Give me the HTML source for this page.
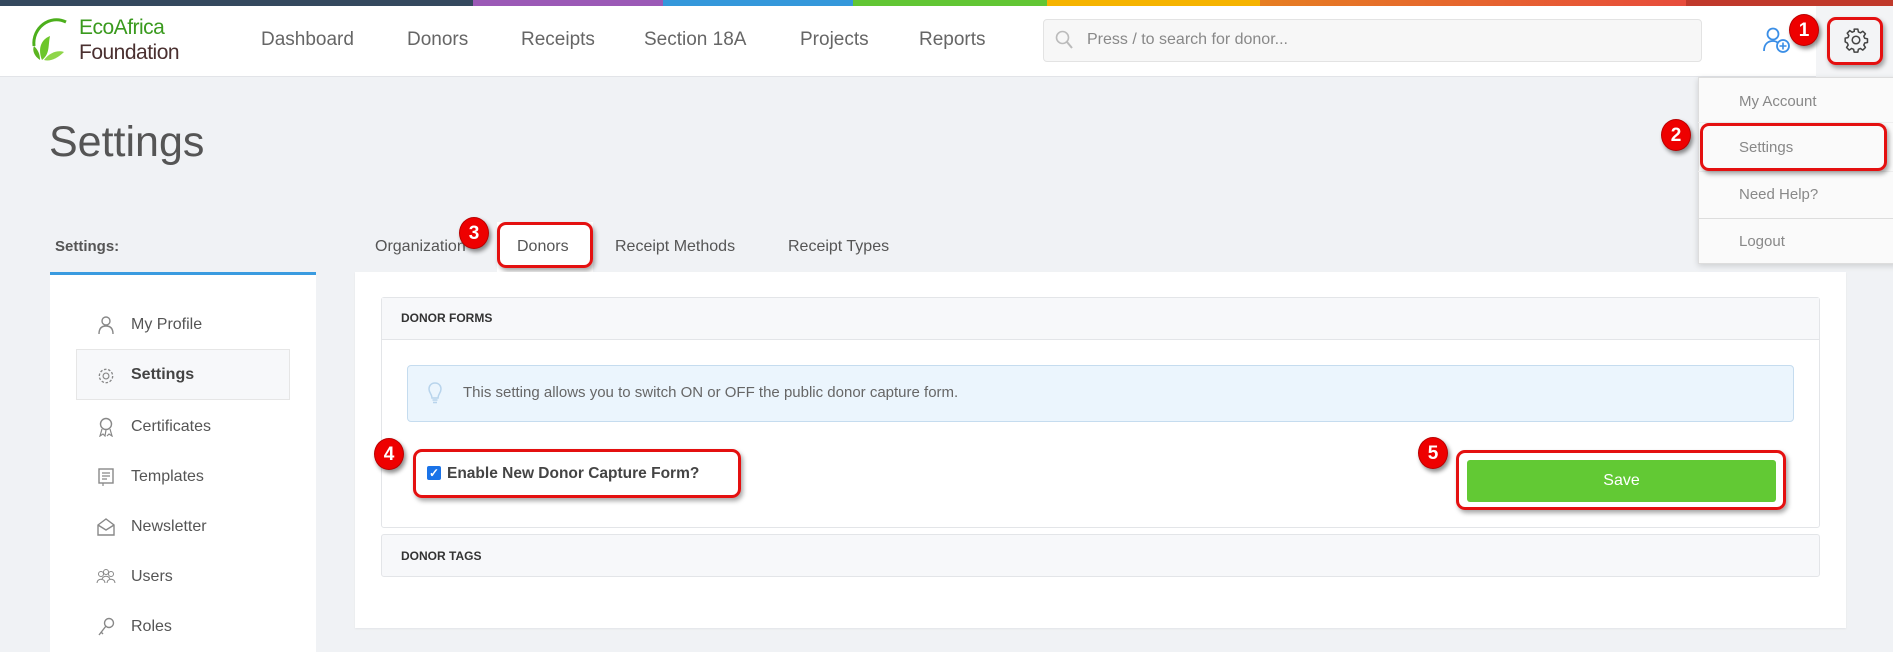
<!DOCTYPE html>
<html><head><meta charset="utf-8"><style>
*{box-sizing:border-box;margin:0;padding:0}
body{width:1893px;height:641px;overflow:hidden;background:#f0f2f5;font-family:"Liberation Sans",sans-serif;color:#555;position:relative}
.a{position:absolute}
.bar{top:0;height:6px}
.badge{position:absolute;width:30px;height:32px;border-radius:50%;background:#e00;color:#fff;font-weight:bold;font-size:19px;text-align:center;line-height:32px;box-shadow:2px 3px 4px rgba(0,0,0,.45);border:1px solid #b00}
.rb{position:absolute;border:3px solid #e41010;border-radius:9px;box-shadow:2px 3px 5px rgba(0,0,0,.35)}
.nav{top:29px;font-size:19px;color:#666}
.si{left:131px;font-size:16px;color:#555}
.ic{left:96px;width:20px;height:20px}
</style></head><body>
<div class="a bar" style="left:0;width:473px;background:#34495e"></div>
<div class="a bar" style="left:473px;width:190px;background:#9b59b6"></div>
<div class="a bar" style="left:663px;width:190px;background:#3498db"></div>
<div class="a bar" style="left:853px;width:194px;background:#62c634"></div>
<div class="a bar" style="left:1047px;width:213px;background:#f6b400"></div>
<div class="a bar" style="left:1260px;width:426px;background:linear-gradient(90deg,#e67e22,#e74c3c)"></div>
<div class="a bar" style="left:1686px;width:207px;background:#c0392b"></div>
<div class="a" style="left:0;top:6px;width:1893px;height:71px;background:#fff;border-bottom:1px solid #e2e4e8"></div>
<!-- logo -->
<svg class="a" style="left:28px;top:16px" width="44" height="48" viewBox="0 0 44 48"><path d="M38 6 C22 -2 4 12 6 30" fill="none" stroke="#4caf1c" stroke-width="3"/><path d="M14 44 C10 34 12 24 22 20 C20 30 22 38 14 44Z" fill="#6cc62a"/><path d="M16 44 C22 36 30 34 36 36 C30 42 22 46 16 44Z" fill="#8fd64a"/><path d="M12 44 C6 40 4 34 6 30 C10 34 12 38 12 44Z" fill="#5bb521"/></svg>
<div class="a" style="left:79px;top:16px;font-size:21px;color:#3a9a1e;letter-spacing:-.5px">EcoAfrica</div>
<div class="a" style="left:79px;top:41px;font-size:21px;color:#4a3030;letter-spacing:-.5px">Foundation</div>
<div class="a nav" style="left:261px">Dashboard</div>
<div class="a nav" style="left:407px">Donors</div>
<div class="a nav" style="left:521px">Receipts</div>
<div class="a nav" style="left:644px">Section 18A</div>
<div class="a nav" style="left:800px">Projects</div>
<div class="a nav" style="left:919px">Reports</div>
<div class="a" style="left:1043px;top:19px;width:659px;height:43px;background:#f7f7f7;border:1px solid #e3e3e3;border-radius:4px"></div>
<svg class="a" style="left:1055px;top:30px" width="18" height="20" viewBox="0 0 18 20"><circle cx="7.5" cy="7.5" r="6" fill="none" stroke="#bbb" stroke-width="1.6"/><path d="M12 12 L17 18" stroke="#bbb" stroke-width="2"/></svg>
<div class="a" style="left:1087px;top:31px;font-size:16px;color:#888">Press / to search for donor...</div>
<svg class="a" style="left:1762px;top:26px" width="30" height="28" viewBox="0 0 30 28"><circle cx="11" cy="8" r="5.5" fill="none" stroke="#3a8ee6" stroke-width="1.8"/><path d="M2 25 C2 17 7 15 11 15 C13 15 15 16 16 17" fill="none" stroke="#3a8ee6" stroke-width="1.8"/><circle cx="21" cy="20" r="6" fill="#fff" stroke="#3a8ee6" stroke-width="1.8"/><path d="M21 16.5V23.5M17.5 20H24.5" stroke="#3a8ee6" stroke-width="1.6"/></svg>
<div class="a" style="left:1816px;top:6px;width:77px;height:71px;background:#f3f4f6"></div>
<svg class="a" style="left:1843px;top:27px" width="26" height="26" viewBox="0 0 24 24"><path d="M10.3 2h3.4l.5 2.6 1.9.8 2.2-1.5 2.4 2.4-1.5 2.2.8 1.9 2.6.5v3.4l-2.6.5-.8 1.9 1.5 2.2-2.4 2.4-2.2-1.5-1.9.8-.5 2.6h-3.4l-.5-2.6-1.9-.8-2.2 1.5-2.4-2.4 1.5-2.2-.8-1.9L2 13.7v-3.4l2.6-.5.8-1.9-1.5-2.2 2.4-2.4 2.2 1.5 1.9-.8z" fill="none" stroke="#444" stroke-width="1.4" stroke-linejoin="round"/><circle cx="12" cy="12" r="3.5" fill="none" stroke="#444" stroke-width="1.4"/></svg>
<div class="rb" style="left:1827px;top:17px;width:56px;height:48px"></div>
<div class="badge" style="left:1789px;top:14px">1</div>
<!-- dropdown -->
<div class="a" style="left:1698px;top:77px;width:200px;height:187px;background:#fafafa;border:1px solid #ddd;box-shadow:0 2px 6px rgba(0,0,0,.15)"></div>
<div class="a" style="left:1698px;top:122px;width:195px;height:1px;background:#eee"></div>
<div class="a" style="left:1698px;top:171px;width:195px;height:1px;background:#eee"></div>
<div class="a" style="left:1698px;top:218px;width:195px;height:1px;background:#ddd"></div>
<div class="a" style="left:1739px;top:93px;font-size:15px;color:#888">My Account</div>
<div class="a" style="left:1739px;top:139px;font-size:15px;color:#888">Settings</div>
<div class="a" style="left:1739px;top:186px;font-size:15px;color:#888">Need Help?</div>
<div class="a" style="left:1739px;top:233px;font-size:15px;color:#888">Logout</div>
<div class="rb" style="left:1700px;top:123px;width:187px;height:48px"></div>
<div class="badge" style="left:1661px;top:119px">2</div>
<!-- title -->
<div class="a" style="left:49px;top:118px;font-size:43px;color:#555;font-weight:300">Settings</div>
<div class="a" style="left:55px;top:238px;font-size:15px;color:#555;font-weight:bold">Settings:</div>
<div class="a" style="left:50px;top:272px;width:266px;height:380px;background:#fff;border-top:3px solid #3a9be0"></div>
<div class="a" style="left:76px;top:349px;width:214px;height:51px;background:#f7f8fa;border:1px solid #e6e6e6"></div>
<svg class="a ic" style="top:315px" viewBox="0 0 20 20"><circle cx="10" cy="6" r="4" fill="none" stroke="#888" stroke-width="1.4"/><path d="M3 19C3 13 6 11 10 11S17 13 17 19" fill="none" stroke="#888" stroke-width="1.4"/></svg>
<div class="a si" style="top:316px">My Profile</div>
<svg class="a ic" style="top:366px" viewBox="0 0 24 24"><circle cx="12" cy="12" r="8" fill="none" stroke="#888" stroke-width="1.6" stroke-dasharray="3 2"/><circle cx="12" cy="12" r="3.5" fill="none" stroke="#888" stroke-width="1.4"/></svg>
<div class="a si" style="top:366px;font-weight:bold;color:#444">Settings</div>
<svg class="a ic" style="top:417px" viewBox="0 0 20 20"><circle cx="10" cy="7" r="5.5" fill="none" stroke="#888" stroke-width="1.4"/><path d="M6 12L4 19 7 17 9 19 10 13M14 12L16 19 13 17 11 19" fill="none" stroke="#888" stroke-width="1.2"/></svg>
<div class="a si" style="top:418px">Certificates</div>
<svg class="a ic" style="top:467px" viewBox="0 0 20 20"><rect x="3" y="2" width="14" height="14" fill="none" stroke="#888" stroke-width="1.4"/><path d="M6 6H14M6 9H14M6 12H11M7 16L7 19" stroke="#888" stroke-width="1.2"/></svg>
<div class="a si" style="top:468px">Templates</div>
<svg class="a ic" style="top:517px" viewBox="0 0 20 20"><path d="M2 8L10 2 18 8V18H2Z M2 8L10 13 18 8" fill="none" stroke="#888" stroke-width="1.4"/></svg>
<div class="a si" style="top:518px">Newsletter</div>
<svg class="a ic" style="top:567px" viewBox="0 0 20 20"><circle cx="5" cy="7" r="2.5" fill="none" stroke="#888"/><circle cx="15" cy="7" r="2.5" fill="none" stroke="#888"/><circle cx="10" cy="5" r="2.5" fill="none" stroke="#888"/><path d="M1 16C1 11 9 11 9 16M11 16C11 11 19 11 19 16M6 13C6 8 14 8 14 13" fill="none" stroke="#888"/></svg>
<div class="a si" style="top:568px">Users</div>
<svg class="a ic" style="top:617px" viewBox="0 0 20 20"><circle cx="13" cy="6" r="4.5" fill="none" stroke="#888" stroke-width="1.4"/><path d="M10 9L3 18M5 15L7 17" stroke="#888" stroke-width="1.4"/></svg>
<div class="a si" style="top:618px">Roles</div>
<!-- tabs -->
<div class="a" style="left:375px;top:238px;font-size:16px;color:#555">Organization</div>
<div class="a" style="left:497px;top:222px;width:96px;height:50px;background:#fff"></div>
<div class="a" style="left:517px;top:238px;font-size:16px;color:#555">Donors</div>
<div class="a" style="left:615px;top:238px;font-size:16px;color:#555">Receipt Methods</div>
<div class="a" style="left:788px;top:238px;font-size:16px;color:#555">Receipt Types</div>
<div class="rb" style="left:497px;top:222px;width:96px;height:46px"></div>
<div class="badge" style="left:459px;top:217px">3</div>
<!-- main -->
<div class="a" style="left:355px;top:272px;width:1491px;height:356px;background:#fff;box-shadow:0 1px 2px rgba(0,0,0,.06)"></div>
<div class="a" style="left:381px;top:297px;width:1439px;height:231px;border:1px solid #e3e5e8;border-radius:3px;background:#fff"></div>
<div class="a" style="left:382px;top:298px;width:1437px;height:42px;background:#f7f8fa;border-bottom:1px solid #e3e5e8"></div>
<div class="a" style="left:401px;top:311px;font-size:12px;font-weight:bold;color:#333">DONOR FORMS</div>
<div class="a" style="left:407px;top:365px;width:1387px;height:57px;background:#ebf5fd;border:1px solid #c5dcef;border-radius:4px"></div>
<svg class="a" style="left:427px;top:381px" width="16" height="24" viewBox="0 0 16 24"><path d="M8 2C4 2 2 5 2 8 2 12 5 13 5 17H11C11 13 14 12 14 8 14 5 12 2 8 2ZM5.5 19H10.5M6 21.5H10" fill="none" stroke="#b8d4ec" stroke-width="1.5"/></svg>
<div class="a" style="left:463px;top:384px;font-size:15px;color:#666">This setting allows you to switch ON or OFF the public donor capture form.</div>
<div class="a" style="left:427px;top:466px;width:14px;height:14px;background:#1a73e8;border-radius:2px;color:#fff;font-size:12px;line-height:14px;text-align:center;font-weight:bold">✓</div>
<div class="a" style="left:447px;top:465px;font-size:15.5px;font-weight:bold;color:#444">Enable New Donor Capture Form?</div>
<div class="rb" style="left:413px;top:449px;width:328px;height:49px"></div>
<div class="badge" style="left:374px;top:438px">4</div>
<div class="a" style="left:1467px;top:460px;width:309px;height:42px;background:#62c934;border-radius:3px;color:#fff;font-size:16px;text-align:center;line-height:42px">Save</div>
<div class="rb" style="left:1456px;top:450px;width:330px;height:60px"></div>
<div class="badge" style="left:1418px;top:437px">5</div>
<div class="a" style="left:381px;top:534px;width:1439px;height:43px;background:#f7f8fa;border:1px solid #e3e5e8;border-radius:3px"></div>
<div class="a" style="left:401px;top:549px;font-size:12px;font-weight:bold;color:#333">DONOR TAGS</div>
</body></html>
